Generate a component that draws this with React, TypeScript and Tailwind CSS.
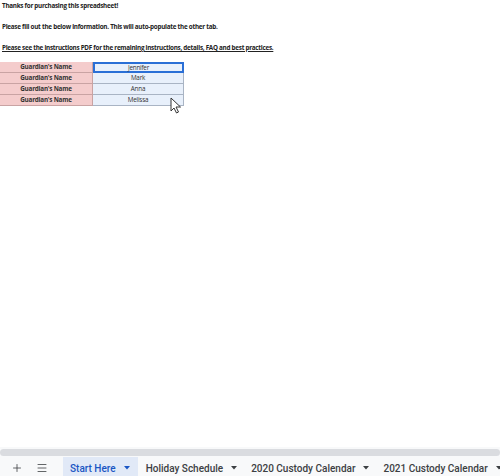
import { Plus, Menu } from 'lucide-react';

const names = ['Jennifer', 'Mark', 'Anna', 'Melissa'];

const tabs = ['Start Here', 'Holiday Schedule', '2020 Custody Calendar', '2021 Custody Calendar'];

function Caret() {
  return (
    <svg width="6" height="3.5" viewBox="0 0 7 4" className="ml-[8px] shrink-0">
      <path d="M0 0 L7 0 L3.5 4 Z" fill="currentColor" />
    </svg>
  );
}

export default function App() {
  return (
    <div className="w-[500px] h-[476px] bg-white relative overflow-hidden flex flex-col" style={{ fontFamily: '"Open Sans", sans-serif' }}>
      <div className="flex-1 relative">
        <div className="pl-[2px] pt-[2px] text-[6.3px] font-bold text-[#222] leading-[7px] tracking-[-0.26px]">
          <p className="h-[21px]">Thanks for purchasing this spreadsheet!</p>
          <p className="h-[21px]">Please fill out the below information. This will auto-populate the other tab.</p>
          <p className="underline h-[16px]">Please see the instructions PDF for the remaining instructions, details, FAQ and best practices.</p>
        </div>
        <div className="mt-[2px] w-[184px] tracking-[-0.2px]">
          {names.map((n, i) => (
            <div key={n} className="flex h-[11px] text-[6.3px] leading-[10px]">
              <div className="w-[93px] bg-[#f4cccc] border-b border-r border-[#c9a3a3] text-center font-bold text-[#333]">
                Guardian's Name
              </div>
              <div
                className={`flex-1 bg-[#e8f0fb] text-center text-[#333] ${
                  i === 0 ? 'border-2 border-[#2a6fd6] leading-[7px]' : 'border-b border-r border-[#a9b4c4]'
                }`}
              >
                {n}
              </div>
            </div>
          ))}
        </div>
        <svg className="absolute left-[170px] top-[97px]" width="12" height="17" viewBox="0 0 12 17">
          <path d="M1 1 L1 14 L4 11 L6.5 16 L8.5 15 L6 10 L10.5 10 Z" fill="white" stroke="#333" strokeWidth="1" strokeLinejoin="round" />
        </svg>
      </div>
      <div className="h-[10px] bg-[#f8f9fa] flex items-center">
        <div className="h-[7px] w-full bg-[#dadce0] rounded-sm" />
      </div>
      <div className="h-[19px] bg-[#f8f9fa] flex items-stretch text-[10px] text-[#3c4043]" style={{ fontFamily: 'Roboto, sans-serif' }}>
        <div className="w-[32px] shrink-0 flex items-center justify-center pl-[1px] pt-[3px]">
          <Plus size={12} strokeWidth={1.6} />
        </div>
        <div className="w-[20px] shrink-0 flex items-center justify-center pt-[3px]">
          <Menu size={12} strokeWidth={1.6} />
        </div>
        <div className="w-[11px] shrink-0" />
        {tabs.map((t, i) => (
          <div
            key={t}
            className={`flex shrink-0 items-center font-medium whitespace-nowrap pt-[3px] ${
              i === 0 ? 'bg-[#e1e9f7] text-[#1a56c4] pl-[7px] pr-[8px]' : 'pl-[8px] pr-[6px]'
            }`}
          >
            {t}
            <Caret />
          </div>
        ))}
      </div>
    </div>
  );
}
